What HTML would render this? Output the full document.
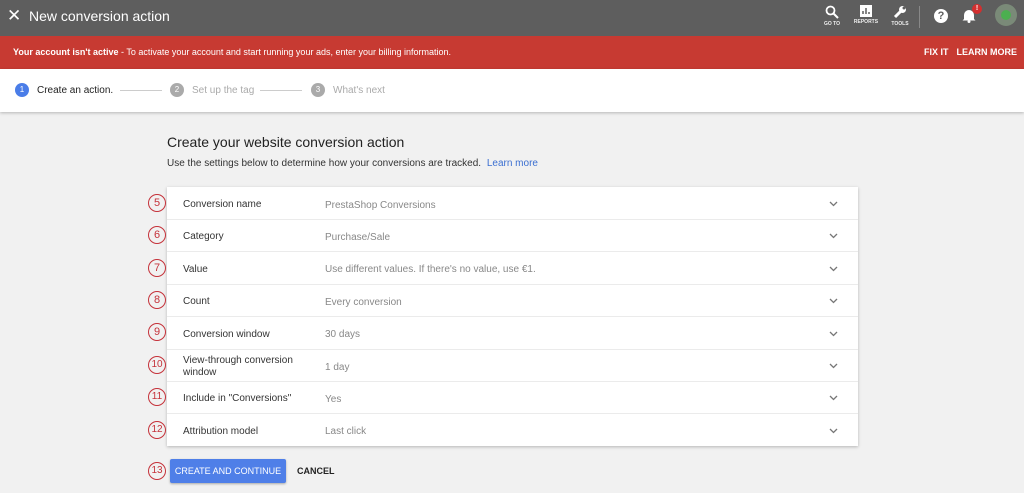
<!DOCTYPE html>
<html><head><style>
body{margin:0;width:1024px;height:493px;overflow:hidden;background:#f1f1f1;font-family:"Liberation Sans",Arial,sans-serif;position:relative}
.hdr{position:absolute;left:0;top:0;width:1024px;height:36px;background:#5e5e5e;color:#fff}
.ban{position:absolute;left:0;top:36px;width:1024px;height:33px;background:#c73a32;color:#fff;font-size:9px}
.step{position:absolute;left:0;top:69px;width:1024px;height:43px;background:#fff;box-shadow:0 1px 3px rgba(0,0,0,.25)}
.abs{position:absolute}
.card{position:absolute;left:167px;top:187px;width:691px;height:259px;background:#fff;box-shadow:0 1px 3px rgba(0,0,0,.25)}
.row{position:absolute;left:0;width:691px;height:32px;border-bottom:1px solid #ebebeb;font-size:10px}
.row .l{position:absolute;left:16px;top:2px;height:32px;display:flex;align-items:center;color:#333;line-height:12px}
.row .v{position:absolute;left:158px;top:2px;height:32px;display:flex;align-items:center;color:#888}
.row svg{position:absolute;right:20px;top:14px}
.c{position:absolute;left:148px;width:16px;height:16px;border:1.5px solid #c5323a;border-radius:50%;color:#c5323a;font-size:11px;text-align:center;line-height:16px}
.num{display:block;width:14px;height:14px;border-radius:50%;color:#fff;font-size:8px;text-align:center;line-height:14px}
.ic{position:absolute;top:5px;text-align:center;font-size:5px;font-weight:bold;color:#eee}
</style></head><body>
<div class="hdr">
<div class="abs" style="left:7px;top:6px;font-size:17px">✕</div>
<div class="abs" style="left:29px;top:8px;font-size:14px">New conversion action</div>
<div class="ic" style="left:820px;width:24px"><svg width="14" height="14" viewBox="0 0 14 14"><circle cx="5.5" cy="5.5" r="4" stroke="#fff" stroke-width="1.8" fill="none"/><path d="M8.5 8.5L13 13" stroke="#fff" stroke-width="2"/></svg><br>GO TO</div>
<div class="ic" style="left:852px;width:28px"><svg width="12" height="12"><rect width="12" height="12" fill="#fff"/><path d="M3 9V6M6 9V3M9 9V7" stroke="#5e5e5e" stroke-width="1.5"/></svg><br>REPORTS</div>
<div class="ic" style="left:889px;width:22px"><svg width="14" height="14" viewBox="0 0 14 14"><path d="M2 12L8 6" stroke="#fff" stroke-width="3"/><circle cx="9.5" cy="4.5" r="3.5" fill="#fff"/><circle cx="11" cy="3" r="1.5" fill="#5e5e5e"/></svg><br>TOOLS</div>
<div class="abs" style="left:919px;top:6px;width:1px;height:22px;background:#888"></div>
<div class="abs" style="left:934px;top:9px;width:14px;height:14px;border-radius:50%;background:#fff;color:#5e5e5e;font-size:11px;font-weight:bold;text-align:center;line-height:14px">?</div>
<svg class="abs" style="left:962px;top:8px" width="14" height="15" viewBox="0 0 14 15"><path d="M2 11V7a5 5 0 0 1 10 0v4l1.5 1.5h-13z" fill="#fff"/><circle cx="7" cy="13.5" r="1.5" fill="#fff"/></svg>
<div class="abs" style="left:972px;top:4px;width:10px;height:10px;border-radius:50%;background:#d32f2f;color:#fff;font-size:7px;text-align:center;line-height:10px;font-weight:bold">!</div>
<div class="abs" style="left:995px;top:4px;width:22px;height:22px;border-radius:50%;background:#7a8a78"><div style="margin:6px;width:10px;height:10px;background:#4caf50;border-radius:50%"></div></div>
</div>
<div class="ban"><div class="abs" style="left:13px;top:11px"><b>Your account isn't active</b> - To activate your account and start running your ads, enter your billing information.</div>
<div class="abs" style="left:924px;top:11px;font-weight:bold">FIX IT</div>
<div class="abs" style="right:7px;top:11px;font-weight:bold">LEARN MORE</div></div>
<div class="step">
<div class="abs" style="left:15px;top:14px"><span class="num" style="background:#4a7de8">1</span></div>
<div class="abs" style="left:37px;top:16px;font-size:10px;color:#222">Create an action.</div>
<div class="abs" style="left:120px;top:21px;width:42px;height:1px;background:#ccc"></div>
<div class="abs" style="left:170px;top:14px"><span class="num" style="background:#aaa">2</span></div>
<div class="abs" style="left:192px;top:16px;font-size:10px;color:#aaa">Set up the tag</div>
<div class="abs" style="left:260px;top:21px;width:42px;height:1px;background:#ccc"></div>
<div class="abs" style="left:311px;top:14px"><span class="num" style="background:#aaa">3</span></div>
<div class="abs" style="left:333px;top:16px;font-size:10px;color:#aaa">What's next</div>
</div>
<div class="abs" style="left:167px;top:134px;font-size:14px;color:#222">Create your website conversion action</div>
<div class="abs" style="left:167px;top:158px;font-size:10px;color:#333">Use the settings below to determine how your conversions are tracked. <span style="color:#3b6fd1;margin-left:3px">Learn more</span></div>
<div class="card">
<div class="row" style="top:0"><div class="l">Conversion name</div><div class="v">PrestaShop Conversions</div><svg width="9" height="6"><path d="M1 1l3.5 3.5L8 1" stroke="#777" fill="none" stroke-width="1.3"/></svg></div>
<div class="row" style="top:32.4px"><div class="l">Category</div><div class="v">Purchase/Sale</div><svg width="9" height="6"><path d="M1 1l3.5 3.5L8 1" stroke="#777" fill="none" stroke-width="1.3"/></svg></div>
<div class="row" style="top:64.8px"><div class="l">Value</div><div class="v">Use different values. If there's no value, use €1.</div><svg width="9" height="6"><path d="M1 1l3.5 3.5L8 1" stroke="#777" fill="none" stroke-width="1.3"/></svg></div>
<div class="row" style="top:97.2px"><div class="l">Count</div><div class="v">Every conversion</div><svg width="9" height="6"><path d="M1 1l3.5 3.5L8 1" stroke="#777" fill="none" stroke-width="1.3"/></svg></div>
<div class="row" style="top:129.6px"><div class="l">Conversion window</div><div class="v">30 days</div><svg width="9" height="6"><path d="M1 1l3.5 3.5L8 1" stroke="#777" fill="none" stroke-width="1.3"/></svg></div>
<div class="row" style="top:162px"><div class="l">View-through conversion<br>window</div><div class="v">1 day</div><svg width="9" height="6"><path d="M1 1l3.5 3.5L8 1" stroke="#777" fill="none" stroke-width="1.3"/></svg></div>
<div class="row" style="top:194.4px"><div class="l">Include in "Conversions"</div><div class="v">Yes</div><svg width="9" height="6"><path d="M1 1l3.5 3.5L8 1" stroke="#777" fill="none" stroke-width="1.3"/></svg></div>
<div class="row" style="top:226.8px;border:0"><div class="l">Attribution model</div><div class="v">Last click</div><svg width="9" height="6"><path d="M1 1l3.5 3.5L8 1" stroke="#777" fill="none" stroke-width="1.3"/></svg></div>
</div>
<div class="c" style="top:194px">5</div>
<div class="c" style="top:226px">6</div>
<div class="c" style="top:259px">7</div>
<div class="c" style="top:291px">8</div>
<div class="c" style="top:323px">9</div>
<div class="c" style="top:356px;font-size:10px">10</div>
<div class="c" style="top:388px;font-size:10px">11</div>
<div class="c" style="top:421px;font-size:10px">12</div>
<div class="c" style="top:462px;font-size:10px">13</div>
<div class="abs" style="left:170px;top:459px;width:116px;height:24px;background:#4f7fe8;color:#fff;font-size:9px;text-align:center;line-height:24px;border-radius:2px;box-shadow:0 1px 2px rgba(0,0,0,.3)">CREATE AND CONTINUE</div>
<div class="abs" style="left:297px;top:466px;font-size:9px;font-weight:bold;color:#222">CANCEL</div>
</body></html>
